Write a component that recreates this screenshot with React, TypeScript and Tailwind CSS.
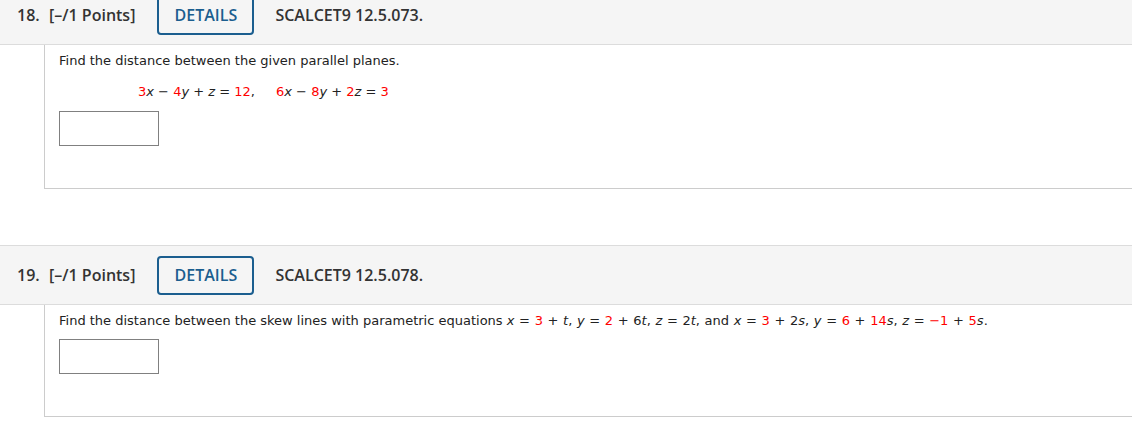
import type { ReactNode } from 'react';

const R = ({ children }: { children: ReactNode }) => <span className="text-[#ff0000]">{children}</span>;
const V = ({ children }: { children: ReactNode }) => <i>{children}</i>;

function Header({ num, code }: { num: string; code: string }) {
  return (
    <div className="h-[60px] bg-[#f5f5f5] border-t border-b border-[#dcdcdc] flex items-center font-['Open_Sans',sans-serif] text-[16px] font-semibold text-[#333]">
      <span className="pl-[17px] w-[49px]">{num}</span>
      <span>[–/1 Points]</span>
      <button className="ml-[22px] w-[97px] h-[39px] border-2 border-[#1b5e8f] rounded-[4px] text-[#1b5e8f] font-semibold">
        DETAILS
      </button>
      <span className="ml-[21px]">{code}</span>
    </div>
  );
}

function AnswerBox() {
  return <div className="w-[100px] h-[35px] border border-[#808080] bg-white" />;
}

export default function App() {
  return (
    <div className="w-[1132px] h-[423px] bg-white overflow-hidden">
      {/* Вопрос 18 */}
      <div className="-mt-[15px]">
        <Header num="18." code="SCALCET9 12.5.073." />
        <div className="ml-[44px] border-l border-b border-[#cccccc] pl-[14px] pt-[8px] pb-[42px] font-['DejaVu_Sans',sans-serif] text-[13px] leading-[16px] text-[#222]">
          <p>Find the distance between the given parallel planes.</p>
          <p className="pl-[79px] mt-[15px] whitespace-pre">
            <R>3</R><V>x</V> − <R>4</R><V>y</V> + <V>z</V> = <R>12</R>,<span className="inline-block w-[21px]" />
            <R>6</R><V>x</V> − <R>8</R><V>y</V> + <R>2</R><V>z</V> = <R>3</R>
          </p>
          <div className="mt-[11px]">
            <AnswerBox />
          </div>
        </div>
      </div>

      {/* Вопрос 19 */}
      <div className="mt-[56px]">
        <Header num="19." code="SCALCET9 12.5.078." />
        <div className="ml-[44px] border-l border-b border-[#cccccc] pl-[14px] pt-[8px] pb-[42px] font-['DejaVu_Sans',sans-serif] text-[13px] leading-[16px] text-[#222]">
          <p>
            Find the distance between the skew lines with parametric equations{' '}
            <span className="[word-spacing:0.5px]">
              <V>x</V> = <R>3</R> + <V>t</V>, <V>y</V> = <R>2</R> + 6<V>t</V>, <V>z</V> = 2<V>t</V>, and <V>x</V> ={' '}
              <R>3</R> + 2<V>s</V>, <V>y</V> = <R>6</R> + <R>14</R><V>s</V>, <V>z</V> = <R>−1</R> + <R>5</R><V>s</V>.
            </span>
          </p>
          <div className="mt-[10px]">
            <AnswerBox />
          </div>
        </div>
      </div>
    </div>
  );
}
